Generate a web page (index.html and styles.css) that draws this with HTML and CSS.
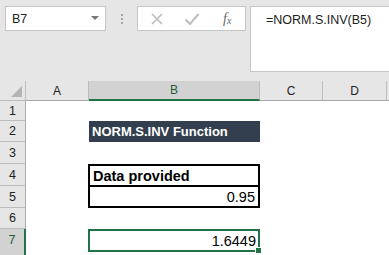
FILE: index.html
```html
<!DOCTYPE html>
<html lang="en">
<head>
    <meta charset="UTF-8">
    <title>NORM.S.INV</title>
    <link rel="stylesheet" href="styles.css">
</head>
<body>
    <div class="toolbar">
        <div class="namebox">
            <span class="ref">B7</span>
            <span class="caret"></span>
        </div>
        <div class="grip"><i></i><i></i><i></i></div>
        <div class="fxbox">
            <svg class="ico" width="14" height="14" viewBox="0 0 14 14">
                <path d="M2 2 L12 12 M12 2 L2 12" stroke="#bdbdbd" stroke-width="1.6" fill="none"/>
            </svg>
            <svg class="ico" width="16" height="14" viewBox="0 0 16 14">
                <path d="M1.5 7.5 L6 12 L14.5 2" stroke="#bdbdbd" stroke-width="2" fill="none"/>
            </svg>
            <span class="fx">f<sub>x</sub></span>
        </div>
        <div class="formula">=NORM.S.INV(B5)</div>
    </div>

    <div class="sheet">
        <div class="corner"></div>
        <div class="colhead">A</div>
        <div class="colhead sel">B</div>
        <div class="colhead">C</div>
        <div class="colhead">D</div>
        <div class="colhead last"></div>

        <div class="rowhead">1</div>
        <div class="cell"></div><div class="cell"></div><div class="cell"></div><div class="cell"></div><div class="cell"></div>

        <div class="rowhead">2</div>
        <div class="cell"></div><div class="cell title">NORM.S.INV Function</div><div class="cell"></div><div class="cell"></div><div class="cell"></div>

        <div class="rowhead">3</div>
        <div class="cell"></div><div class="cell"></div><div class="cell"></div><div class="cell"></div><div class="cell"></div>

        <div class="rowhead">4</div>
        <div class="cell"></div><div class="cell box-top">Data provided</div><div class="cell"></div><div class="cell"></div><div class="cell"></div>

        <div class="rowhead">5</div>
        <div class="cell"></div><div class="cell box-bottom num">0.95</div><div class="cell"></div><div class="cell"></div><div class="cell"></div>

        <div class="rowhead">6</div>
        <div class="cell"></div><div class="cell"></div><div class="cell"></div><div class="cell"></div><div class="cell"></div>

        <div class="rowhead sel">7</div>
        <div class="cell"></div><div class="cell active num">1.6449<span class="handle"></span></div><div class="cell"></div><div class="cell"></div><div class="cell"></div>
    </div>
</body>
</html>
```

FILE: styles.css
```css
html, body {
    height: 255px;
    overflow: hidden;
}
body {
    margin: 0;
    background: #fff;
    font-family: "Liberation Sans", Arial, sans-serif;
}
.toolbar {
    display: flex;
    align-items: flex-start;
    height: 81px;
    padding: 6px 0 0 5px;
    box-sizing: border-box;
    background: #e6e6e6;
}
.namebox {
    width: 101px;
    height: 25px;
    box-sizing: border-box;
    background: #fff;
    border: 1px solid #c6c6c6;
    display: flex;
    align-items: center;
    justify-content: space-between;
    padding: 0 6px 0 6px;
    font-size: 12.5px;
    color: #222;
}
.caret {
    width: 0;
    height: 0;
    border-left: 4px solid transparent;
    border-right: 4px solid transparent;
    border-top: 4px solid #777;
    margin-top: -2px;
}
.grip {
    width: 31px;
    height: 25px;
    display: flex;
    flex-direction: column;
    align-items: center;
    justify-content: center;
    gap: 2px;
}
.grip i {
    width: 2px;
    height: 2px;
    background: #a6a6a6;
}
.fxbox {
    width: 109px;
    height: 25px;
    box-sizing: border-box;
    background: #fff;
    border: 1px solid #c6c6c6;
    display: flex;
    align-items: center;
    padding-left: 12px;
    gap: 20px;
}
.fx {
    font-family: "Liberation Serif", serif;
    font-style: italic;
    font-size: 14px;
    color: #666;
    margin-left: 3px;
}
.fx sub {
    font-size: 10px;
    vertical-align: -1px;
}
.formula {
    margin-left: 4px;
    flex: 1;
    height: 66px;
    box-sizing: border-box;
    background: #fff;
    border: 1px solid #c6c6c6;
    border-right: none;
    padding: 6px 0 0 15px;
    font-size: 12.5px;
    color: #222;
}
.sheet {
    display: grid;
    grid-template-columns: 26px 63px 171px 63px 64px 2px;
    grid-template-rows: 20px 20px 21px 22px 22px 22px 21px 26px;
}
.corner {
    background: #e6e6e6;
    border-right: 1px solid #bdbdbd;
    border-bottom: 1px solid #bdbdbd;
    position: relative;
}
.corner::after {
    content: "";
    position: absolute;
    right: 3px;
    bottom: 3px;
    border-left: 11px solid transparent;
    border-bottom: 11px solid #b4b4b4;
}
.colhead {
    background: #e6e6e6;
    border-right: 1px solid #bdbdbd;
    border-bottom: 1px solid #a8a8a8;
    font-size: 12px;
    color: #222;
    display: flex;
    align-items: center;
    justify-content: center;
}
.colhead.sel {
    background: #d2d2d2;
    border-bottom: 2px solid #217346;
    color: #1e5e38;
}
.colhead.last {
    border-right: none;
}
.rowhead {
    background: #e6e6e6;
    border-right: 1px solid #a8a8a8;
    border-bottom: 1px solid #bdbdbd;
    font-size: 12.5px;
    color: #222;
    display: flex;
    align-items: center;
    justify-content: center;
    box-sizing: border-box;
}
.rowhead.sel {
    background: #d2d2d2;
    border-right: 2px solid #217346;
    border-bottom: none;
    color: #1e5e38;
    align-items: flex-start;
    padding-top: 4px;
}
.cell {
    font-size: 14.5px;
    color: #000;
    display: flex;
    align-items: center;
    padding: 0 3px;
    box-sizing: border-box;
    white-space: nowrap;
    position: relative;
}
.num {
    justify-content: flex-end;
}
.title {
    background: #333f4f;
    color: #fff;
    font-weight: bold;
    font-size: 13px;
}
.box-top {
    border: 2px solid #000;
    border-bottom: 1px solid #000;
    font-weight: bold;
    margin-left: -1px;
}
.box-bottom {
    border: 2px solid #000;
    border-top: 1px solid #000;
    margin-left: -1px;
}
.active {
    border: 2px solid #217346;
    margin-left: -1px;
    padding-right: 2px;
    height: 23px;
}
.handle {
    position: absolute;
    right: -4px;
    bottom: -4px;
    width: 5px;
    height: 5px;
    background: #217346;
    border: 1px solid #fff;
}
```
